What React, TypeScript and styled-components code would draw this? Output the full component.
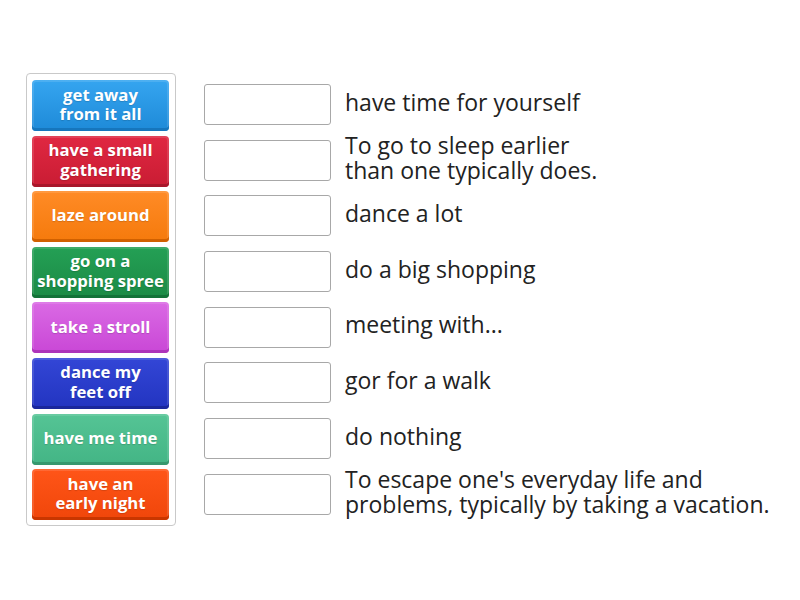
import React from "react";
import styled, { createGlobalStyle } from "styled-components";

const Global = createGlobalStyle`
  html, body { margin: 0; padding: 0; background: #ffffff; }
  body { font-family: "Open Sans", "Liberation Sans", sans-serif; }
`;

const Page = styled.div`
  display: flex;
  align-items: flex-start;
  gap: 28px;
  padding: 73px 0 0 26px;
  width: 800px;
  height: 600px;
  box-sizing: border-box;
`;

const Panel = styled.div`
  display: flex;
  flex-direction: column;
  gap: 4.6px;
  width: 150px;
  box-sizing: border-box;
  padding: 6px 6px 5px 5px;
  border: 1px solid #c9c9c9;
  border-radius: 4px;
`;

const Tile = styled.div<{ $top: string; $bottom: string; $edge: string }>`
  height: 51px;
  box-sizing: border-box;
  border-radius: 4px;
  display: flex;
  align-items: center;
  justify-content: center;
  text-align: center;
  padding: 0 0 3px;
  background: linear-gradient(to bottom, ${(p) => p.$top}, ${(p) => p.$bottom});
  box-shadow: inset 0 -3px 0 ${(p) => p.$edge}, inset 0 0 0 2px rgba(255, 255, 255, 0.12);
  color: #ffffff;
  font-weight: 700;
  font-size: 16.7px;
  line-height: 19.5px;
  white-space: nowrap;
  text-shadow: 0 1px 1px rgba(0, 0, 0, 0.15);
`;

const Targets = styled.div`
  display: grid;
  grid-auto-rows: 41px;
  row-gap: 14.7px;
  padding-top: 11px;
`;

const Row = styled.div`
  display: flex;
  align-items: center;
  gap: 14px;
`;

const Slot = styled.div`
  width: 127px;
  height: 41px;
  box-sizing: border-box;
  border: 1px solid #a8a8a8;
  border-radius: 3px;
  background: #fff;
  flex: none;
`;

const Clue = styled.div`
  font-size: 23px;
  line-height: 25px;
  color: #222;
  white-space: nowrap;
  margin-top: -5px;
`;

const tiles = [
  { t: ["get away", "from it all"], top: "#35a5f0", bottom: "#1e8ad8", edge: "#1676bd" },
  { t: ["have a small", "gathering"], top: "#e02842", bottom: "#c91c33", edge: "#a8162a" },
  { t: ["laze around"], top: "#ff8b26", bottom: "#f57a0c", edge: "#d06000" },
  { t: ["go on a", "shopping spree"], top: "#24a055", bottom: "#1b8a45", edge: "#137238" },
  { t: ["take a stroll"], top: "#da6ae4", bottom: "#c947d6", edge: "#ad34ba" },
  { t: ["dance my", "feet off"], top: "#3346d6", bottom: "#2234c0", edge: "#1a279c" },
  { t: ["have me time"], top: "#55c495", bottom: "#43b585", edge: "#36986e" },
  { t: ["have an", "early night"], top: "#ff5518", bottom: "#f0460a", edge: "#c93600" },
];

const clues = [
  ["have time for yourself"],
  ["To go to sleep earlier", "than one typically does."],
  ["dance a lot"],
  ["do a big shopping"],
  ["meeting with..."],
  ["gor for a walk"],
  ["do nothing"],
  ["To escape one's everyday life and", "problems, typically by taking a vacation."],
];

export default function App() {
  return (
    <>
      <Global />
      <Page>
        <Panel>
          {tiles.map((x, i) => (
            <Tile key={i} $top={x.top} $bottom={x.bottom} $edge={x.edge}>
              <span>
                {x.t.map((l, j) => (
                  <React.Fragment key={j}>
                    {j > 0 && <br />}
                    {l}
                  </React.Fragment>
                ))}
              </span>
            </Tile>
          ))}
        </Panel>
        <Targets>
          {clues.map((c, i) => (
            <Row key={i}>
              <Slot />
              <Clue>
                {c.map((l, j) => (
                  <React.Fragment key={j}>
                    {j > 0 && <br />}
                    {l}
                  </React.Fragment>
                ))}
              </Clue>
            </Row>
          ))}
        </Targets>
      </Page>
    </>
  );
}
